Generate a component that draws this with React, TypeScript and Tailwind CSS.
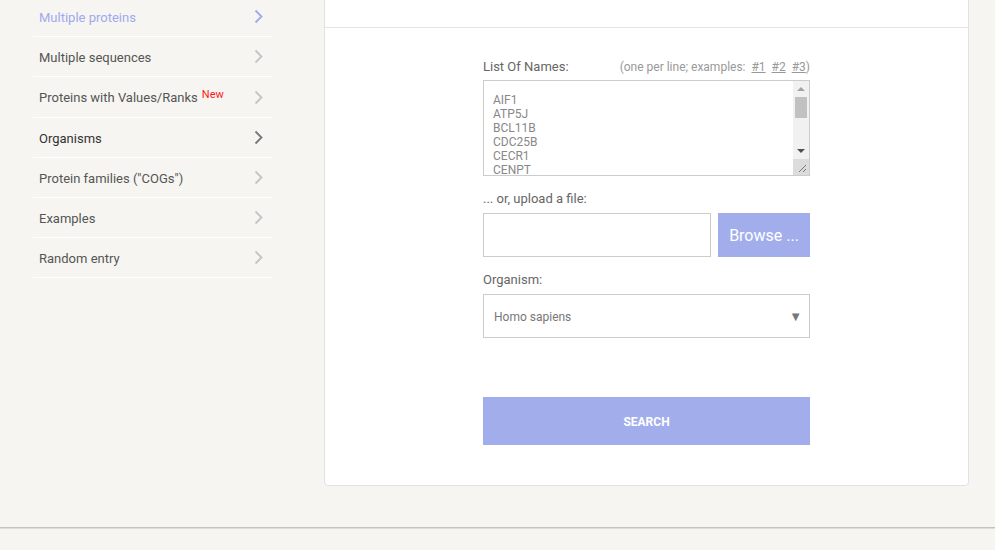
import React from "react";

const navItems = [
  { label: "Multiple proteins", active: true },
  { label: "Multiple sequences" },
  { label: "Proteins with Values/Ranks", isNew: true },
  { label: "Organisms", dark: true },
  { label: "Protein families (\"COGs\")" },
  { label: "Examples" },
  { label: "Random entry" },
];

const genes = ["AIF1", "ATP5J", "BCL11B", "CDC25B", "CECR1", "CENPT"];

function Chevron({ color }: { color: string }) {
  return (
    <svg width="9" height="15" viewBox="0 0 9 15" className="shrink-0">
      <polyline points="1.5,1.5 7.5,7.5 1.5,13.5" fill="none" stroke={color} strokeWidth="1.8" />
    </svg>
  );
}

function Sidebar() {
  return (
    <div className="w-[240px] shrink-0 pt-[37px]">
      {navItems.map((item) => (
        <div
          key={item.label}
          className={`flex items-center justify-between border-b border-white pl-[6px] pr-[10px] ${item.isNew ? "h-[41px]" : "h-10"}`}
        >
          <span
            className={`pt-[2px] text-[13px] ${item.active ? "text-[#a0a9ef]" : item.dark ? "text-[#333]" : "text-[#555]"}`}
          >
            {item.label}
            {item.isNew && <sup className="relative -top-[4px] ml-[4px] text-[11px] text-[#ff1a1a]">New</sup>}
          </span>
          <Chevron color={item.active ? "#a0a9ef" : item.dark ? "#777" : "#c4c4c4"} />
        </div>
      ))}
    </div>
  );
}

function FakeTextarea() {
  return (
    <div className="flex h-[96px] border border-[#cccccc] bg-white">
      <div className="flex-1 overflow-hidden pl-[9px] pt-[12px] text-[12px] leading-[14px] text-[#888]">
        {genes.map((g) => (
          <div key={g}>{g}</div>
        ))}
      </div>
      <div className="flex w-[16px] flex-col bg-[#f1f1f1]">
        <div className="flex h-[16px] items-center justify-center">
          <div className="h-0 w-0 border-x-[4px] border-b-[4px] border-x-transparent border-b-[#a3a3a3]" />
        </div>
        <div className="mx-[2px] h-[21px] bg-[#c1c1c1]" />
        <div className="flex-1" />
        <div className="flex h-[16px] items-center justify-center">
          <div className="h-0 w-0 border-x-[4px] border-t-[4px] border-x-transparent border-t-[#505050]" />
        </div>
        <div className="flex h-[16px] items-end justify-end bg-[#dcdcdc] p-[2px]">
          <svg width="9" height="9" viewBox="0 0 9 9">
            <line x1="1" y1="8" x2="8" y2="1" stroke="#777" strokeWidth="1" />
            <line x1="5" y1="8" x2="8" y2="5" stroke="#777" strokeWidth="1" />
          </svg>
        </div>
      </div>
    </div>
  );
}

function SearchCard() {
  return (
    <div className="w-[645px] shrink-0 rounded-[4px] border border-[#e2e2e2] bg-white">
      <div className="h-[67px] border-b border-[#e4e4e4]" />
      <div className="flex justify-center pb-[40px] pt-[30px]">
        <div className="w-[327px] text-[#666]">
          <div className="mb-[6px] flex h-[16px] items-center justify-between pt-[2px]">
            <span className="text-[13px]">List Of Names:</span>
            <span className="text-[12px] text-[#999]">
              (one per line; examples:&nbsp; <span className="underline">#1</span>&nbsp;{" "}
              <span className="underline">#2</span>&nbsp; <span className="underline">#3</span>)
            </span>
          </div>
          <FakeTextarea />
          <div className="mb-[7px] mt-[14px] h-[16px] pt-[1px] text-[13px] leading-[16px]">... or, upload a file:</div>
          <div className="flex gap-[7px]">
            <div className="h-[44px] flex-1 border border-[#cccccc] bg-white" />
            <div className="flex h-[44px] w-[92px] items-center justify-center bg-[#a2aeec] pt-[2px] text-[16px] text-white">
              Browse ...
            </div>
          </div>
          <div className="mb-[7px] mt-[14px] h-[16px] pt-[1px] text-[13px] leading-[16px]">Organism:</div>
          <div className="flex h-[44px] items-center justify-between border border-[#cccccc] bg-white pl-[10px] pr-[7px] pt-[2px]">
            <span className="text-[12px] text-[#777]">Homo sapiens</span>
            <span className="text-[13px] text-[#777]">▼</span>
          </div>
          <div className="mt-[59px] flex h-[48px] items-center justify-center bg-[#a2aeec] pt-[2px] text-[12px] font-bold text-white">
            SEARCH
          </div>
        </div>
      </div>
    </div>
  );
}

export default function App() {
  return (
    <div
      className="relative h-[550px] w-full overflow-hidden bg-[#f6f5f1]"
      style={{ fontFamily: "Roboto, 'Liberation Sans', Arial, sans-serif" }}
    >
      <div className="-mt-[40px] flex gap-[51px] pl-[33px]">
        <Sidebar />
        <SearchCard />
      </div>
      <div className="mt-[41px] border-t border-[#c2c2bf]" />
      <div className="border-t border-[#deddd9]" />
    </div>
  );
}
